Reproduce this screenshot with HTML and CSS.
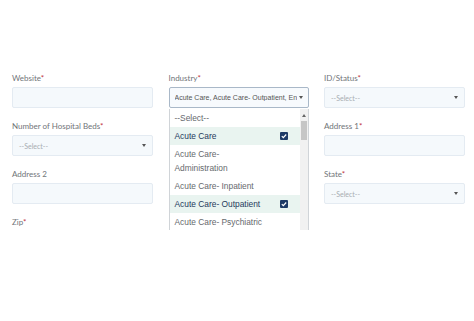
FILE: index.html
```html
<!DOCTYPE html>
<html>
<head>
<meta charset="utf-8">
<link rel="stylesheet" href="styles.css">
</head>
<body>
<div class="form">
  <div class="field">
    <div class="label">Website<span class="req">*</span></div>
    <div class="input"></div>
  </div>
  <div class="field industry">
    <div class="label">Industry<span class="req">*</span></div>
    <div class="input select open"><span class="value">Acute Care, Acute Care- Outpatient, En</span><span class="caret"></span></div>
    <div class="dropdown">
      <div class="options">
        <div class="opt">--Select--</div>
        <div class="opt sel"><span>Acute Care</span><span class="check"><svg viewBox="0 0 8 8" width="8" height="8"><rect width="8" height="8" rx="1" fill="#1d3a66"/><path d="M1.8 4.1 L3.3 5.6 L6.2 2.5" stroke="#fff" stroke-width="1.2" fill="none"/></svg></span></div>
        <div class="opt">Acute Care-<br>Administration</div>
        <div class="opt">Acute Care- Inpatient</div>
        <div class="opt sel"><span>Acute Care- Outpatient</span><span class="check"><svg viewBox="0 0 8 8" width="8" height="8"><rect width="8" height="8" rx="1" fill="#1d3a66"/><path d="M1.8 4.1 L3.3 5.6 L6.2 2.5" stroke="#fff" stroke-width="1.2" fill="none"/></svg></span></div>
        <div class="opt">Acute Care- Psychiatric</div>
      </div>
      <div class="scrollbar">
        <div class="arrow"></div>
        <div class="thumb"></div>
      </div>
    </div>
  </div>
  <div class="field">
    <div class="label">ID/Status<span class="req">*</span></div>
    <div class="input select"><span class="ph">--Select--</span><span class="caret"></span></div>
  </div>

  <div class="field">
    <div class="label">Number of Hospital Beds<span class="req">*</span></div>
    <div class="input select"><span class="ph">--Select--</span><span class="caret"></span></div>
  </div>
  <div class="field"></div>
  <div class="field">
    <div class="label">Address 1<span class="req">*</span></div>
    <div class="input"></div>
  </div>

  <div class="field">
    <div class="label">Address 2</div>
    <div class="input"></div>
  </div>
  <div class="field"></div>
  <div class="field">
    <div class="label">State<span class="req">*</span></div>
    <div class="input select"><span class="ph">--Select--</span><span class="caret"></span></div>
  </div>

  <div class="field">
    <div class="label">Zip<span class="req">*</span></div>
  </div>
</div>
</body>
</html>
```

FILE: styles.css
```css
html, body {
  margin: 0;
  padding: 0;
  background: #ffffff;
}
body {
  width: 474px;
  height: 321px;
  overflow: hidden;
}
.form {
  display: grid;
  grid-template-columns: 141px 140px 141px;
  column-gap: 15.5px;
  row-gap: 13px;
  padding: 73px 0 0 12px;
  font-family: Lato, "Liberation Sans", sans-serif;
}
.field {
  position: relative;
  min-height: 35px;
}
.label {
  font-size: 8px;
  line-height: 11px;
  height: 11px;
  color: #707478;
  margin-bottom: 3px;
  white-space: nowrap;
}
.req {
  color: #c0313e;
}
.input {
  box-sizing: border-box;
  height: 21px;
  background: #f5f9fc;
  border: 1px solid #e4ebf2;
  border-radius: 2px;
  display: flex;
  align-items: center;
  padding: 0 6px;
}
.select {
  justify-content: space-between;
}
.ph {
  font-size: 7px;
  color: #a8adb2;
}
.caret {
  width: 0;
  height: 0;
  border-left: 2.5px solid transparent;
  border-right: 2.5px solid transparent;
  border-top: 3px solid #555;
}
.open {
  border-color: #a9b8c8;
  background: #f7fafd;
  padding: 0 5px;
}
.value {
  font-family: "Liberation Sans", Arial, sans-serif;
  font-size: 7px;
  color: #555;
  white-space: nowrap;
  overflow: hidden;
}
.dropdown {
  position: absolute;
  left: 0;
  top: 36px;
  width: 140px;
  height: 121px;
  overflow: hidden;
  background: #fff;
  border-left: 1px solid #d0d4d8;
  border-right: 1px solid #d0d4d8;
  box-sizing: border-box;
  display: flex;
  z-index: 5;
}
.options {
  flex: 1;
  font-family: "Liberation Sans", Arial, sans-serif;
  font-size: 8.4px;
  color: #66696d;
}
.opt {
  padding: 2px 12px 2px 5px;
  line-height: 14px;
  display: block;
}
.opt.sel {
  display: flex;
  justify-content: space-between;
  align-items: center;
  background: #e9f4f0;
  color: #1f3a5c;
}
.check {
  display: flex;
}
.scrollbar {
  width: 8px;
  background: #f1f1f1;
  display: flex;
  flex-direction: column;
  align-items: center;
}
.arrow {
  margin-top: 5px;
  width: 0;
  height: 0;
  border-left: 2.5px solid transparent;
  border-right: 2.5px solid transparent;
  border-bottom: 3px solid #666;
}
.thumb {
  margin-top: 4px;
  width: 6px;
  height: 19px;
  background: #c6c6c6;
}
```
